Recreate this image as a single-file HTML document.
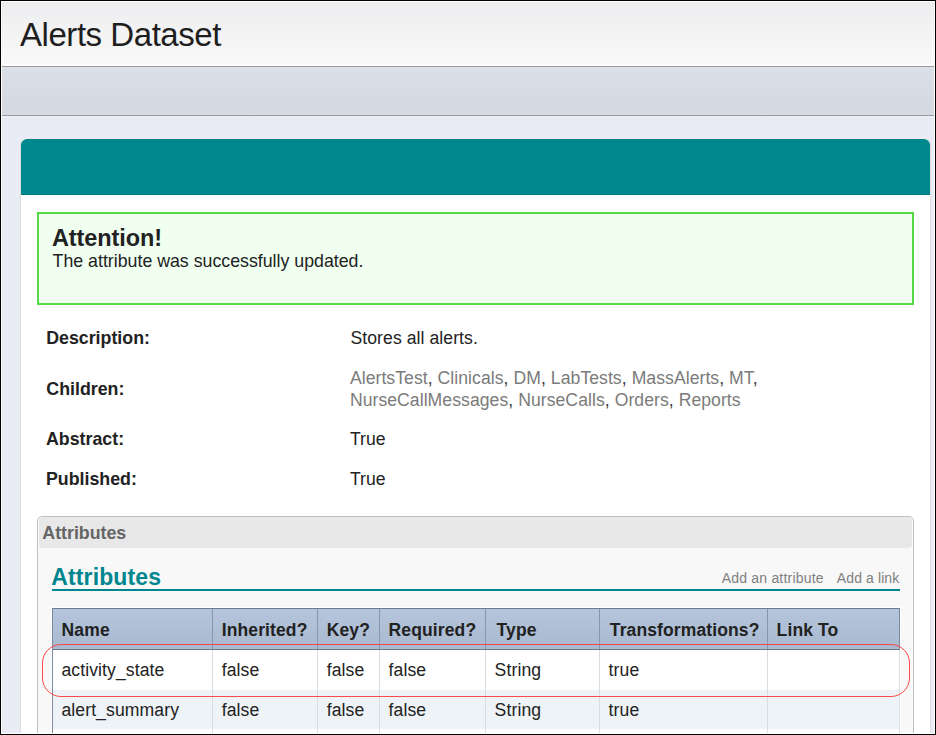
<!DOCTYPE html>
<html>
<head>
<meta charset="utf-8">
<style>
html,body{margin:0;padding:0;}
body{width:936px;height:735px;overflow:hidden;position:relative;background:#e9ecf4;font-family:"Liberation Sans",sans-serif;color:#222;}
.a{position:absolute;}
.t{position:absolute;line-height:1;white-space:nowrap;}
</style>
</head>
<body>
<!-- header -->
<div class="a" style="left:0;top:0;width:936px;height:65px;background:linear-gradient(#ecedef,#faf9f9);"></div>
<div class="a" style="left:0;top:65px;width:936px;height:1px;background:#fff;"></div>
<div class="a" style="left:0;top:66px;width:936px;height:1px;background:#999;"></div>
<div class="a" style="left:0;top:67px;width:936px;height:48px;background:linear-gradient(#e0e4ea,#dadee6 2px,#d4d8e0 46px,#d9dde5 47px);"></div>
<div class="a" style="left:0;top:115px;width:936px;height:1px;background:#999;"></div>
<div class="a" style="left:0;top:116px;width:936px;height:1px;background:#eef1f8;"></div>
<div class="t" style="left:20px;top:18px;font-size:33px;letter-spacing:-0.45px;color:#1e1e1e;">Alerts Dataset</div>

<!-- panel -->
<div class="a" style="left:20px;top:138px;width:909px;height:620px;background:#fff;border:1px solid #ddd;border-top-color:#efe8e8;border-radius:6px 6px 0 0;"></div>
<div class="a" style="left:21px;top:139px;width:909px;height:56px;background:linear-gradient(#00808a 0,#00808a 1px,#00888f 1px,#00888f 55px,#007b84 55px);border-radius:6px 6px 0 0;"></div>

<!-- attention -->
<div class="a" style="left:37px;top:212px;width:873px;height:89px;border:2px solid #55d945;background:#f0fff0;"></div>
<div class="t" style="left:52px;top:227px;font-size:23.5px;letter-spacing:-0.1px;font-weight:bold;">Attention!</div>
<div class="t" style="left:52.6px;top:252.7px;font-size:17.75px;">The attribute was successfully updated.</div>

<!-- description -->
<div class="t" style="left:46.2px;top:330.4px;font-size:17.8px;font-weight:bold;">Description:</div>
<div class="t" style="left:350.5px;top:330.1px;font-size:17.6px;letter-spacing:0.07px;">Stores all alerts.</div>
<div class="t" style="left:46.3px;top:380.8px;font-size:17.8px;font-weight:bold;">Children:</div>
<div class="t" style="left:349.9px;top:369.8px;font-size:17.6px;letter-spacing:0.055px;color:#7b7b7b;">AlertsTest<span style="color:#3c3c3c">,</span> Clinicals<span style="color:#3c3c3c">,</span> DM<span style="color:#3c3c3c">,</span> LabTests<span style="color:#3c3c3c">,</span> MassAlerts<span style="color:#3c3c3c">,</span> MT<span style="color:#3c3c3c">,</span></div>
<div class="t" style="left:349.9px;top:392.1px;font-size:17.6px;letter-spacing:0.055px;color:#7b7b7b;">NurseCallMessages<span style="color:#3c3c3c">,</span> NurseCalls<span style="color:#3c3c3c">,</span> Orders<span style="color:#3c3c3c">,</span> Reports</div>
<div class="t" style="left:46px;top:431px;font-size:17.8px;font-weight:bold;">Abstract:</div>
<div class="t" style="left:350px;top:430.9px;font-size:17.6px;">True</div>
<div class="t" style="left:46px;top:471.1px;font-size:17.8px;font-weight:bold;">Published:</div>
<div class="t" style="left:350px;top:470.9px;font-size:17.6px;">True</div>

<!-- attributes box -->
<div class="a" style="left:37px;top:516px;width:875px;height:300px;background:#f8f8f8;border:1px solid #c0c0c0;border-radius:5px 5px 0 0;overflow:hidden;">
  <div class="a" style="left:1px;top:0;width:873px;height:31px;background:#e8e8e8;border-radius:4px;"></div>
</div>
<div class="t" style="left:42.3px;top:525px;font-size:17.8px;font-weight:bold;color:#656565;">Attributes</div>
<div class="t" style="left:51.3px;top:566.4px;font-size:23px;letter-spacing:0.12px;font-weight:bold;color:#00868f;">Attributes</div>
<div class="t" style="left:721.8px;top:571.1px;font-size:14px;letter-spacing:0.19px;color:#808080;">Add an attribute</div>
<div class="t" style="left:836.8px;top:571.1px;font-size:14px;letter-spacing:0.11px;color:#808080;">Add a link</div>
<div class="a" style="left:52px;top:589px;width:848px;height:2px;background:#00868f;"></div>

<!-- table -->
<div class="a" style="left:51px;top:607px;width:850px;height:140px;background:#fff;"></div>
<div class="a" style="left:52px;top:608px;width:848px;height:41px;background:linear-gradient(#b5c5db,#a9b9cf);border-top:1px solid #6b7a8a;border-bottom:1px solid #6b7a8a;box-sizing:border-box;height:42px;"></div>
<div class="a" style="left:53px;top:690px;width:846px;height:39px;background:#eef3f7;"></div>
<div class="a" style="left:52px;top:608px;width:1px;height:130px;background:#7b8a9c;"></div>
<div class="a" style="left:899px;top:608px;width:1px;height:42px;background:#7b8a9c;"></div><div class="a" style="left:899px;top:650px;width:1px;height:90px;background:#dcdcdc;"></div>
<!-- column lines -->
<div class="a" style="left:212px;top:609px;width:1px;height:40px;background:#8797ab;"></div>
<div class="a" style="left:317px;top:609px;width:1px;height:40px;background:#8797ab;"></div>
<div class="a" style="left:379px;top:609px;width:1px;height:40px;background:#8797ab;"></div>
<div class="a" style="left:485px;top:609px;width:1px;height:40px;background:#8797ab;"></div>
<div class="a" style="left:599px;top:609px;width:1px;height:40px;background:#8797ab;"></div>
<div class="a" style="left:767px;top:609px;width:1px;height:40px;background:#8797ab;"></div>
<div class="a" style="left:212px;top:650px;width:1px;height:90px;background:#dcdcdc;"></div>
<div class="a" style="left:317px;top:650px;width:1px;height:90px;background:#dcdcdc;"></div>
<div class="a" style="left:379px;top:650px;width:1px;height:90px;background:#dcdcdc;"></div>
<div class="a" style="left:485px;top:650px;width:1px;height:90px;background:#dcdcdc;"></div>
<div class="a" style="left:599px;top:650px;width:1px;height:90px;background:#dcdcdc;"></div>
<div class="a" style="left:767px;top:650px;width:1px;height:90px;background:#dcdcdc;"></div>

<div class="t" style="left:61.6px;top:621.5px;font-size:17.5px;font-weight:bold;letter-spacing:0.12px;">Name</div>
<div class="t" style="left:221.7px;top:621.5px;font-size:17.5px;font-weight:bold;letter-spacing:0.12px;">Inherited?</div>
<div class="t" style="left:326.7px;top:621.5px;font-size:17.5px;font-weight:bold;letter-spacing:0.12px;">Key?</div>
<div class="t" style="left:388.6px;top:621.5px;font-size:17.5px;font-weight:bold;letter-spacing:0.12px;">Required?</div>
<div class="t" style="left:496.6px;top:621.5px;font-size:17.5px;font-weight:bold;letter-spacing:0.12px;">Type</div>
<div class="t" style="left:609.8px;top:621.5px;font-size:17.5px;font-weight:bold;letter-spacing:0.12px;">Transformations?</div>
<div class="t" style="left:776.6px;top:621.5px;font-size:17.5px;font-weight:bold;letter-spacing:0.12px;">Link To</div>

<div class="t" style="left:61.4px;top:662.3px;font-size:17.6px;letter-spacing:0.1px;">activity_state</div>
<div class="t" style="left:221.7px;top:662.3px;font-size:17.6px;letter-spacing:0.1px;">false</div>
<div class="t" style="left:326.7px;top:662.3px;font-size:17.6px;letter-spacing:0.1px;">false</div>
<div class="t" style="left:388.6px;top:662.3px;font-size:17.6px;letter-spacing:0.1px;">false</div>
<div class="t" style="left:494.6px;top:662.3px;font-size:17.6px;letter-spacing:0.1px;">String</div>
<div class="t" style="left:608.6px;top:662.3px;font-size:17.6px;letter-spacing:0.1px;">true</div>

<div class="t" style="left:61.4px;top:701.9px;font-size:17.6px;letter-spacing:0.1px;">alert_summary</div>
<div class="t" style="left:221.7px;top:701.9px;font-size:17.6px;letter-spacing:0.1px;">false</div>
<div class="t" style="left:326.7px;top:701.9px;font-size:17.6px;letter-spacing:0.1px;">false</div>
<div class="t" style="left:388.6px;top:701.9px;font-size:17.6px;letter-spacing:0.1px;">false</div>
<div class="t" style="left:494.6px;top:701.9px;font-size:17.6px;letter-spacing:0.1px;">String</div>
<div class="t" style="left:608.6px;top:701.9px;font-size:17.6px;letter-spacing:0.1px;">true</div>

<!-- red highlight -->
<div class="a" style="left:42px;top:644px;width:866px;height:51px;border:1.3px solid #ff4848;border-radius:19px;"></div>

<!-- frame -->
<div class="a" style="left:0;top:0;width:934px;height:733px;border:1px solid #000;"></div>
<div class="a" style="left:1px;top:1px;width:932px;height:731px;border:1px solid #fff;"></div>
</body>
</html>
